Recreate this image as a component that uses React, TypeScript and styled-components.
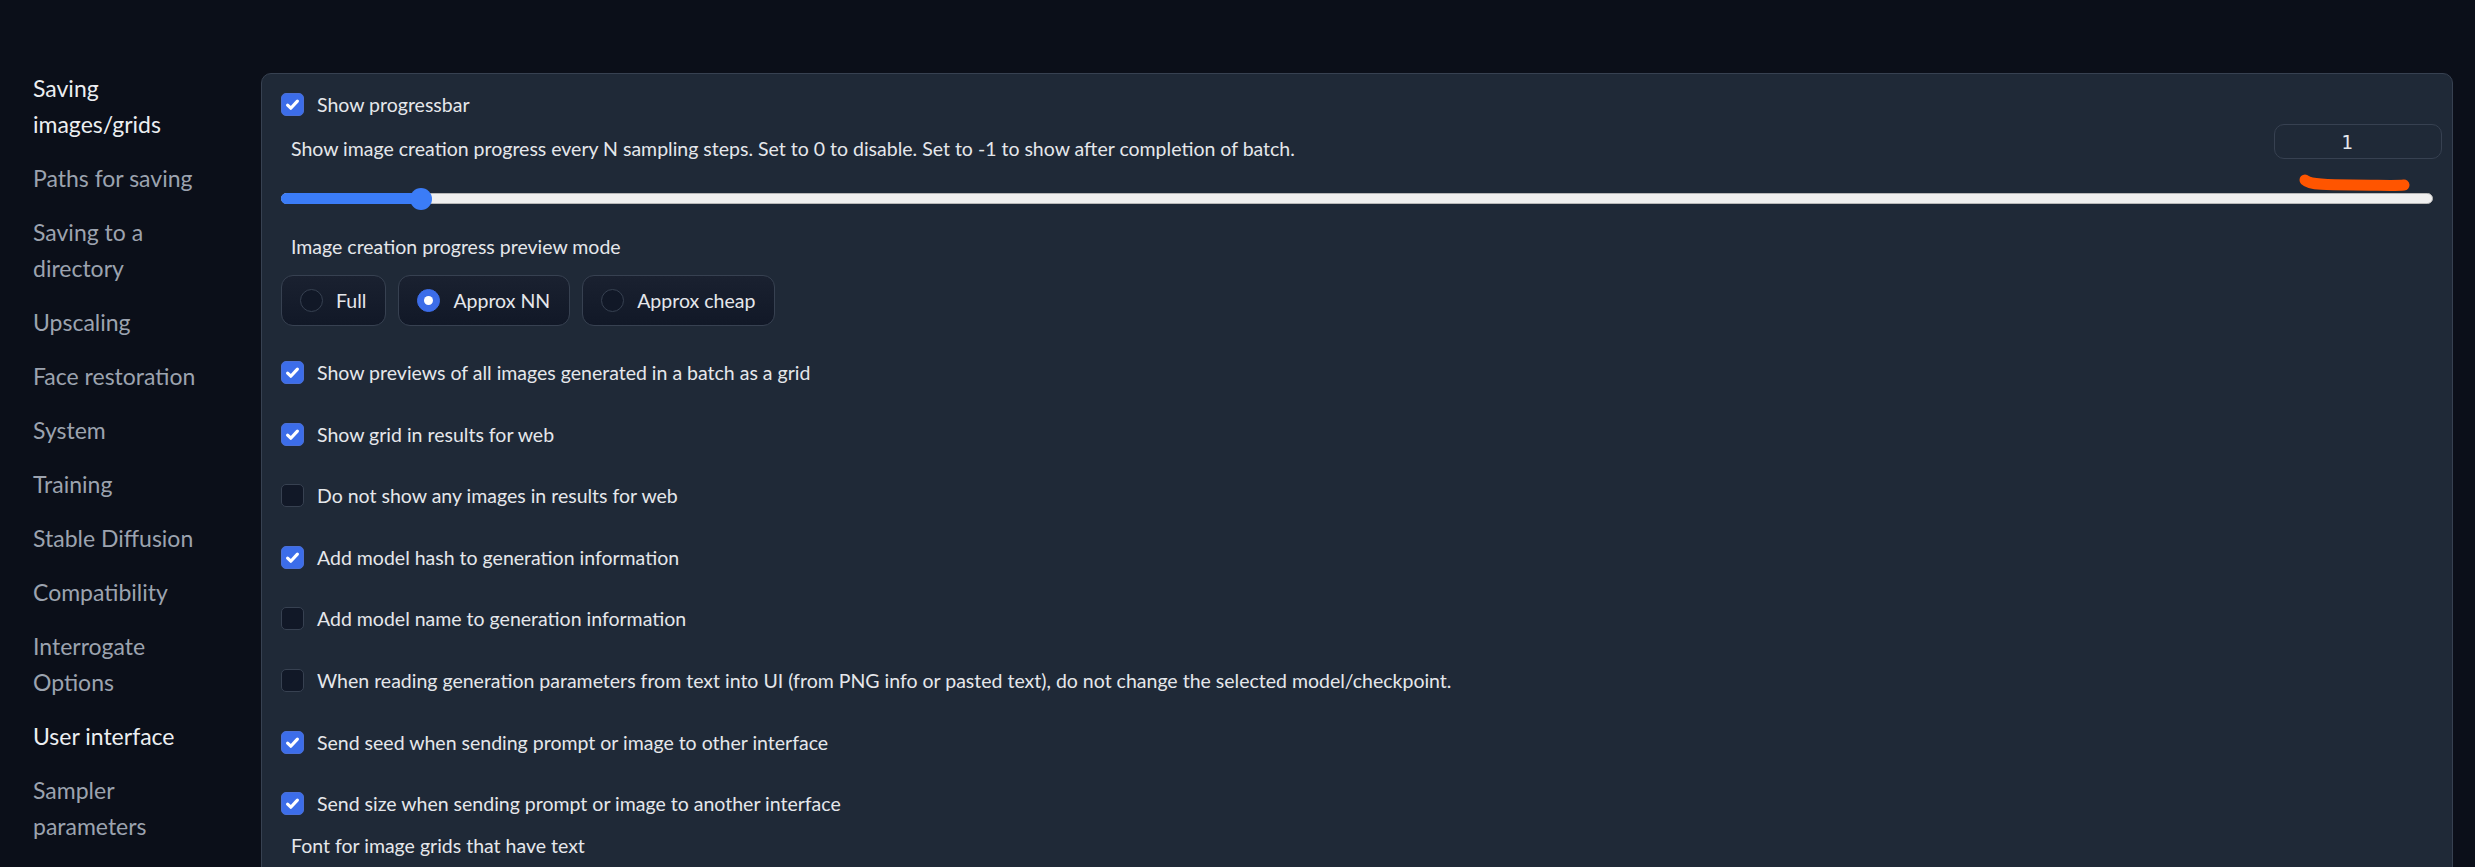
import React from "react";
import styled, { createGlobalStyle } from "styled-components";

const GlobalStyle = createGlobalStyle`
  html, body {
    margin: 0;
    padding: 0;
    overflow: hidden;
    background: #0b0f19;
  }
  body {
    font-family: Lato, "Open Sans", sans-serif;
    color: #e5e7eb;
  }
`;

const Layout = styled.div`
  display: flex;
  align-items: flex-start;
  width: 2475px;
  height: 867px;
  overflow: hidden;
`;

const Sidebar = styled.nav`
  flex: 0 0 261px;
  box-sizing: border-box;
  padding: 0 30px 0 33px;
  margin-top: 70px;
  display: flex;
  flex-direction: column;
  gap: 18px;
`;

const NavItem = styled.div<{ $active?: boolean }>`
  font-size: 23px;
  line-height: 36px;
  color: ${(p) => (p.$active ? "#eceef1" : "#9ca3af")};
`;

const Panel = styled.section`
  position: relative;
  flex: 1;
  margin: 73px 22px 0 0;
  min-height: 840px;
  box-sizing: border-box;
  background: #1f2937;
  border: 1px solid #374151;
  border-radius: 10px;
  padding: 19px 19px 0;
  display: flex;
  flex-direction: column;
`;

const CheckRow = styled.label<{ $mt: number }>`
  display: flex;
  align-items: center;
  gap: 13px;
  height: 23px;
  margin-top: ${(p) => p.$mt}px;
  font-size: 19.5px;
  line-height: 23px;
  color: #e5e7eb;
  white-space: nowrap;
`;

const CheckBox = styled.span<{ $on: boolean }>`
  flex: 0 0 23px;
  width: 23px;
  height: 23px;
  box-sizing: border-box;
  border-radius: 5px;
  border: 1px solid ${(p) => (p.$on ? "#4a6fd6" : "#374151")};
  background: ${(p) => (p.$on ? "#3c6de9" : "#111827")};
  display: grid;
  place-items: center;
`;

const FieldLabel = styled.div<{ $mt?: number }>`
  font-size: 19.5px;
  line-height: 20px;
  color: #e5e7eb;
  padding-left: 10px;
  margin-top: ${(p) => p.$mt ?? 0}px;
  white-space: nowrap;
`;

const SliderHeader = styled.div`
  display: flex;
  justify-content: space-between;
  align-items: flex-end;
  margin-top: 8px;
`;

const NumberBox = styled.div`
  width: 168px;
  height: 35px;
  box-sizing: border-box;
  margin-right: -9px;
  padding-right: 22px;
  border: 1px solid #374151;
  border-radius: 10px;
  background: #1f2937;
  display: flex;
  align-items: center;
  justify-content: center;
  font-family: "DejaVu Sans Mono", "Liberation Mono", monospace;
  font-size: 19px;
  color: #e5e7eb;
`;

const SliderTrack = styled.div`
  position: relative;
  height: 11px;
  box-sizing: border-box;
  margin-top: 34px;
  border-radius: 6px;
  background: #efefef;
  border: 1px solid #b8b8b8;
`;

const SliderFill = styled.div`
  position: absolute;
  left: -1px;
  top: -1px;
  bottom: -1px;
  border-radius: 6px 0 0 6px;
  background: #3b7cf7;
`;

const SliderThumb = styled.div`
  position: absolute;
  top: 50%;
  width: 22px;
  height: 22px;
  border-radius: 50%;
  background: #3b7cf7;
  transform: translate(-50%, -50%);
`;

const RadioGroup = styled.div`
  display: flex;
  gap: 12px;
  margin-top: 17.7px;
`;

const RadioOption = styled.label`
  display: flex;
  align-items: center;
  gap: 13px;
  height: 51px;
  box-sizing: border-box;
  padding: 0 19px 0 18px;
  border: 1px solid #374151;
  border-radius: 12px;
  background: linear-gradient(to bottom, #1a2130, #111827);
  font-size: 19.5px;
  color: #e5e7eb;
`;

const RadioDot = styled.span<{ $on: boolean }>`
  width: 23px;
  height: 23px;
  box-sizing: border-box;
  border-radius: 50%;
  border: 1px solid ${(p) => (p.$on ? "#3c6de9" : "#374151")};
  background: ${(p) => (p.$on ? "#3c6de9" : "#111827")};
  display: grid;
  place-items: center;

  &::after {
    content: "";
    display: ${(p) => (p.$on ? "block" : "none")};
    width: 9px;
    height: 9px;
    border-radius: 50%;
    background: #ffffff;
  }
`;

const Annotation = styled.svg`
  position: absolute;
  left: 2036px;
  top: 99px;
  width: 114px;
  height: 22px;
  pointer-events: none;
`;

const Check = () => (
  <svg width="17" height="17" viewBox="0 0 16 16">
    <path
      d="M3.4 8.6l3 2.9 6.2-6.6"
      fill="none"
      stroke="#ffffff"
      strokeWidth="3"
      strokeLinecap="round"
      strokeLinejoin="round"
    />
  </svg>
);

const navItems: { label: string; active?: boolean }[] = [
  { label: "Saving images/grids", active: true },
  { label: "Paths for saving" },
  { label: "Saving to a directory" },
  { label: "Upscaling" },
  { label: "Face restoration" },
  { label: "System" },
  { label: "Training" },
  { label: "Stable Diffusion" },
  { label: "Compatibility" },
  { label: "Interrogate Options" },
  { label: "User interface", active: true },
  { label: "Sampler parameters" },
];

const checks: { label: string; on: boolean }[] = [
  { label: "Show previews of all images generated in a batch as a grid", on: true },
  { label: "Show grid in results for web", on: true },
  { label: "Do not show any images in results for web", on: false },
  { label: "Add model hash to generation information", on: true },
  { label: "Add model name to generation information", on: false },
  {
    label:
      "When reading generation parameters from text into UI (from PNG info or pasted text), do not change the selected model/checkpoint.",
    on: false,
  },
  { label: "Send seed when sending prompt or image to other interface", on: true },
  { label: "Send size when sending prompt or image to another interface", on: true },
];

const previewModes = ["Full", "Approx NN", "Approx cheap"];

const Setting = ({ label, on, mt }: { label: string; on: boolean; mt: number }) => (
  <CheckRow $mt={mt}>
    <CheckBox $on={on}>{on && <Check />}</CheckBox>
    {label}
  </CheckRow>
);

export default function App() {
  const min = -1;
  const max = 30;
  const value = 1;
  const pct = ((value - min) / (max - min)) * 100;

  return (
    <>
      <GlobalStyle />
      <Layout>
        <Sidebar>
          {navItems.map((item) => (
            <NavItem key={item.label} $active={item.active}>
              {item.label}
            </NavItem>
          ))}
        </Sidebar>
        <Panel>
          <Setting label="Show progressbar" on mt={0} />

          <SliderHeader>
            <FieldLabel>
              Show image creation progress every N sampling steps. Set to 0 to disable. Set to -1 to show after
              completion of batch.
            </FieldLabel>
            <NumberBox>{value}</NumberBox>
          </SliderHeader>
          <SliderTrack>
            <SliderFill style={{ width: `${pct}%` }} />
            <SliderThumb style={{ left: `${pct}%` }} />
          </SliderTrack>

          <FieldLabel $mt={33.3}>Image creation progress preview mode</FieldLabel>
          <RadioGroup>
            {previewModes.map((mode) => (
              <RadioOption key={mode}>
                <RadioDot $on={mode === "Approx NN"} />
                {mode}
              </RadioOption>
            ))}
          </RadioGroup>

          {checks.map((c, i) => (
            <Setting key={c.label} label={c.label} on={c.on} mt={i === 0 ? 35 : 38.6} />
          ))}

          <FieldLabel $mt={21.3}>Font for image grids that have text</FieldLabel>

          <Annotation viewBox="0 0 114 22">
            <path
              d="M7 7 C 12 12, 30 12, 55 12 S 96 13, 106 12"
              fill="none"
              stroke="#ff5500"
              strokeWidth="11"
              strokeLinecap="round"
            />
          </Annotation>
        </Panel>
      </Layout>
    </>
  );
}
